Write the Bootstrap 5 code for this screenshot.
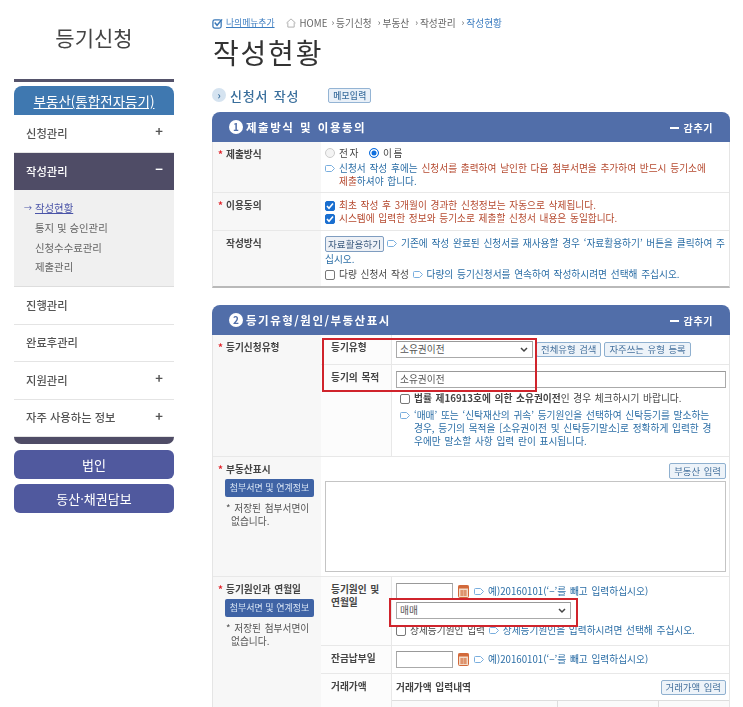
<!DOCTYPE html>
<html lang="ko">
<head>
<meta charset="utf-8">
<title>등기신청 작성현황</title>
<link href="https://cdn.jsdelivr.net/npm/bootstrap@5.3.0/dist/css/bootstrap.min.css" rel="stylesheet">
<style>
html,body{height:707px;overflow:hidden;background:#fff}
body{font-family:"Noto Sans CJK KR","Liberation Sans",sans-serif;font-size:9.7px;line-height:13px;color:#444;word-spacing:1px;white-space:nowrap}
.page-wrap{width:743px;height:707px;padding-left:14px;gap:38px;filter:blur(.35px)}
.side{width:160px;flex:none;word-spacing:0}
.side-title{height:79px;padding-top:22px;font-size:21px;line-height:30px;text-align:center;color:#444}
.side-rule{height:3px;background:#55536b;margin-bottom:4px}
.side-head{height:29px;background:#3f78b0;border-radius:8px 8px 0 0;color:#fff;text-align:center;font-size:13.5px;line-height:30px;text-decoration:underline}
.side-row{height:37.5px;padding:0 11px 0 12px;border-bottom:1px solid #e4e4e4;font-size:11.3px;font-weight:500;color:#555}
.side-row b{font-size:13px;font-weight:700;color:#555;margin-top:-5px}
.side-row.on{background:#4f4c66;color:#fff;border-bottom:0}
.side-row.on b{color:#fff}
.side-sub{height:97px;background:#f0f0f0;border-bottom:1px solid #ddd;padding:8px 0 0 21px;font-size:10.4px;line-height:19.8px;color:#666}
.side-sub .cur{color:#4b55a8;text-decoration:underline}
.side-sub .arw{position:absolute;margin-left:-11px;color:#4b55a8;font-size:8px}
.side-end{height:7px;background:#4f4c66;border-radius:0 0 8px 8px;margin-bottom:6px}
.side-btn{height:29px;background:#50599e;border-radius:6px;color:#fff;text-align:center;line-height:29px;font-size:13px;margin-bottom:5px}
.main-col{width:518px;flex:none}
.crumbs{height:25px;padding-top:21px;font-size:9.7px;line-height:12px;color:#666;word-spacing:0}
.crumbs .mine{color:#3b7cc0;text-decoration:underline;font-size:8.8px;margin:0 11px 0 3px}
.crumbs .now{color:#3b7cc0}
.crumbs .home{margin:0 4px 0 0}
.crumbs .gt{font-size:9px;margin:0 2px 0 6px;color:#666}
.page-h{height:42px;padding-top:11px;font-size:28px;line-height:32px;color:#333;letter-spacing:1.8px;padding-left:1px}
.sect{height:24px;padding-top:21px;gap:4px;color:#3a6f9c;font-size:13px;font-weight:500;line-height:16px;letter-spacing:.8px;box-sizing:content-box}
.sect-dot{width:14px;height:14px;border-radius:50%;background:#d5e3f0;color:#3a6f9c;font-size:10px;line-height:13px;text-align:center;font-weight:700;letter-spacing:0}
.memo{margin-left:25px;font-size:8.8px;line-height:13px;padding:0 4px;height:15px;color:#3d6f9e;background:#e9f0f8;border:1px solid #94b4d4;border-radius:2px;font-weight:500;letter-spacing:.2px;word-spacing:0}
.panel-hd{height:30px;background:#516ea9;border-radius:8px 8px 0 0;padding:0 17px;color:#fff;font-size:11.5px;font-weight:700;letter-spacing:1.5px}
.panel-hd .num{width:14px;height:14px;border-radius:50%;background:#fff;color:#516ea9;font-size:10px;line-height:14px;text-align:center;margin-right:3px;letter-spacing:0}
.panel-hd .hide{font-size:10px;letter-spacing:.6px}
.panel-hd .hide i{display:inline-block;width:9px;height:2px;background:#fff;vertical-align:middle;margin:0 5px 2px 0}
.frm{border-left:1px solid #e5e5e5;border-right:1px solid #e5e5e5}
.frm-a{border-bottom:2px solid #b9b9b9;margin-bottom:17px}
.frm-row{border-top:1px solid #e8e8e8}
.frm-row:first-child{border-top:0}
.frm-l{width:108px;flex:none;background:#f7f7f7;padding:6px 0 0 5px;font-weight:700;color:#444}
.frm-l .dot{display:inline-block;width:8px;color:#e2232a}
.frm-l .dot.no{visibility:hidden}
.frm-r{flex:1;min-width:0;padding:5px 3px 0 4px}
.r1{height:50px}.r2{height:38px}.r3{height:56px}
.r4{height:121px}.r5{height:120px}.r6{height:140px}
.txt-b{color:#2b6ea6}
.txt-r{color:#b5492f}
.ind{padding-left:14px;text-indent:-14px}
.tag{width:10px;height:7px;margin-right:4px;vertical-align:0}
.chk{width:10px;height:10px;flex:none;border:1px solid #777;border-radius:2px;background:#fff;display:inline-block;vertical-align:-2px;margin-right:4px}
.chk.on{background:#1a6fd0;border-color:#1a6fd0;position:relative}
.chk.on svg{position:absolute;left:-1px;top:-1px}
.rad{width:10px;height:10px;border-radius:50%;display:inline-block;vertical-align:-1px;border:1px solid #ccc;margin-right:4px;background:#f4f4f4}
.rad.on{border:1.5px solid #0f6fde;background:#0f6fde;box-shadow:inset 0 0 0 1.5px #fff;margin-left:9px}
.spaced{letter-spacing:1.6px}
.pale-btn{display:inline-block;height:15px;line-height:13px;padding:0 4px;border:1px solid #8fb0cf;border-radius:2px;background:#edf3f9;color:#44709c;font-size:9.4px;word-spacing:1px}
.pale-btn.tall{height:16px;line-height:14px}
.pale-btn.lg{height:16px;width:59px;text-align:center;padding:0;line-height:14px;font-size:9.6px;background:#eef1f6;border-color:#7f9dc0;color:#3f5d80;margin-right:3px;vertical-align:middle}
.lh15{line-height:15px}
.pt6{padding-top:6px}
.sub-l{width:71px;flex:none;padding:6px 0 0 10px;font-weight:700;color:#444;line-height:12.5px;border-right:1px solid #e8e8e8;background:#fcfcfc}
.sub-r{flex:1;min-width:0;padding:0 3px 0 4px}
.hairline{border-top:1px solid #e8e8e8}
.inp{height:17px;border:1px solid #aaa;background:#fff;padding:0 3px;line-height:15px;color:#555;border-top-color:#999}
.selbox{position:relative}
.selbox svg{position:absolute;right:4px;top:5px}
.wsel{width:137px}.wdate{width:57px}.wsel2{width:175px}
.m6{margin-top:6px}.m2{margin-top:2px}.m4{margin-top:4px}.m5{margin-top:5px}
.h1row{height:29px}.h68{height:68px}.h28{height:28px}.h26{height:26px}
.gap5{gap:5px}.gap3{gap:3px}
.att{display:block;margin:3px 0 0 7px;width:89px;height:18px;line-height:17px;background:#3f63a5;color:#d8e4f4;border-radius:2px;font-size:9px;text-align:center;font-weight:400;word-spacing:0}
.att-note{margin:5px 0 0 8px;padding-left:5px;text-indent:-5px;font-weight:400;color:#555;line-height:12.5px;font-size:9.7px}
.btn-line{height:18px}
.area{height:91px;border:1px solid #c4c4c4;background:#fff}
.cal{width:11px;height:13px;flex:none}
.red-box{position:absolute;border:2px solid #d0242c;pointer-events:none}
.rb1{left:109px;top:3px;width:215px;height:54px}
.rb2{left:68px;top:21px;width:189px;height:29px}
.tbl-top{height:8px;border-top:1px solid #ddd;background:#fafafa;margin:0 -3px 0 -4px}
.tc1{width:166px;border-right:1px solid #ddd}.tc2{width:101px;border-right:1px solid #ddd}
</style>
</head>
<body>
<svg width="0" height="0" class="position-absolute"><symbol id="tg" viewBox="0 0 10 7"><path d="M1.500 .5H6.500L9.500 3.500 6.500 6.500H1.500Q.5 6.500 .5 5.500V1.500Q.5 .5 1.500 .5Z" fill="none" stroke="#79aede"/></symbol>
<symbol id="cl" viewBox="0 0 11 13"><rect x=".5" y=".5" width="10" height="12" rx="1" fill="#f3dcc9" stroke="#d2693a"/><rect x=".5" y=".5" width="10" height="3" fill="#d2693a"/><path d="M2 6h7M2 8h7M2 10h7M4 5v6M7 5v6" stroke="#d2693a" stroke-width=".8"/></symbol></svg>
<div class="d-flex page-wrap">
  <aside class="side">
    <div class="side-title">등기신청</div>
    <div class="side-rule"></div>
    <div class="side-head">부동산(통합전자등기)</div>
    <div class="side-row d-flex justify-content-between align-items-center"><span>신청관리</span><b>+</b></div>
    <div class="side-row on d-flex justify-content-between align-items-center"><span>작성관리</span><b>−</b></div>
    <div class="side-sub">
      <div><span class="arw">→</span><span class="cur">작성현황</span></div>
      <div>통지 및 승인관리</div>
      <div>신청수수료관리</div>
      <div>제출관리</div>
    </div>
    <div class="side-row d-flex align-items-center"><span>진행관리</span></div>
    <div class="side-row d-flex align-items-center"><span>완료후관리</span></div>
    <div class="side-row d-flex justify-content-between align-items-center"><span>지원관리</span><b>+</b></div>
    <div class="side-row d-flex justify-content-between align-items-center"><span>자주 사용하는 정보</span><b>+</b></div>
    <div class="side-end"></div>
    <div class="side-btn">법인</div>
    <div class="side-btn">동산·채권담보</div>
  </aside>
  <main class="main-col">
    <div class="crumbs d-flex align-items-center">
      <svg width="11" height="11" viewBox="0 0 12 12"><rect x="1" y="2" width="9" height="9" rx="2" fill="none" stroke="#3a78b8" stroke-width="1.4"/><path d="M3 5l2.500 3L11 1.500" fill="none" stroke="#3a78b8" stroke-width="1.6"/></svg>
      <span class="mine">나의메뉴추가</span>
      <svg class="home" width="10" height="10" viewBox="0 0 11 11"><path d="M.5 5.500L5.500 1l5 4.500M2 5v5h7V5" fill="none" stroke="#aaa"/></svg>
      <span>HOME</span><span class="gt ms-1">›</span><span>등기신청</span><span class="gt">›</span><span>부동산</span><span class="gt">›</span><span>작성관리</span><span class="gt">›</span><span class="now">작성현황</span>
    </div>
    <div class="page-h">작성현황</div>
    <div class="sect d-flex align-items-start"><span class="sect-dot">›</span><span>신청서 작성</span><span class="memo">메모입력</span></div>

    <div class="panel-hd d-flex align-items-center justify-content-between">
      <div class="d-flex align-items-center"><span class="num">1</span>제출방식 및 이용동의</div>
      <div class="hide"><i></i>감추기</div>
    </div>
    <div class="frm frm-a">
      <div class="frm-row r1 d-flex">
        <div class="frm-l"><span class="dot">*</span>제출방식</div>
        <div class="frm-r">
          <div><span class="rad"></span><span class="spaced">전자</span><span class="rad on"></span><span class="spaced">이름</span></div>
          <div class="ind m2"><svg class="tag"><use href="#tg"/></svg><span class="txt-b">신청서 작성 후에는 </span><span class="txt-r">신청서를 출력하여 날인한 다음 첨부서면을 추가하여 반드시 등기소에<br>제출</span><span class="txt-b">하셔야 합니다.</span></div>
        </div>
      </div>
      <div class="frm-row r2 d-flex">
        <div class="frm-l"><span class="dot">*</span>이용동의</div>
        <div class="frm-r pt6">
          <div class="txt-r"><span class="chk on"><svg width="10" height="10" viewBox="0 0 10 10"><path d="M2 5l2 2.200L8 2.500" fill="none" stroke="#fff" stroke-width="1.6"/></svg></span>최초 작성 후 3개월이 경과한 신청정보는 자동으로 삭제됩니다.</div>
          <div class="txt-r"><span class="chk on"><svg width="10" height="10" viewBox="0 0 10 10"><path d="M2 5l2 2.200L8 2.500" fill="none" stroke="#fff" stroke-width="1.6"/></svg></span>시스템에 입력한 정보와 등기소로 제출할 신청서 내용은 동일합니다.</div>
        </div>
      </div>
      <div class="frm-row r3 d-flex">
        <div class="frm-l"><span class="dot no">*</span>작성방식</div>
        <div class="frm-r lh15">
          <div class="txt-b"><span class="pale-btn lg">자료활용하기</span><svg class="tag"><use href="#tg"/></svg>기존에 작성 완료된 신청서를 재사용할 경우 ‘자료활용하기’ 버튼을 클릭하여 주<br>십시오.</div>
          <div><span class="chk"></span>다량 신청서 작성 <svg class="tag"><use href="#tg"/></svg><span class="txt-b">다량의 등기신청서를 연속하여 작성하시려면 선택해 주십시오.</span></div>
        </div>
      </div>
    </div>

    <div class="panel-hd d-flex align-items-center justify-content-between">
      <div class="d-flex align-items-center"><span class="num">2</span>등기유형/원인/부동산표시</div>
      <div class="hide"><i></i>감추기</div>
    </div>
    <div class="frm position-relative">
      <div class="frm-row r4 d-flex position-relative">
        <div class="frm-l"><span class="dot">*</span>등기신청유형</div>
        <div class="flex-grow-1 d-flex flex-column">
          <div class="d-flex h1row">
            <div class="sub-l">등기유형</div>
            <div class="sub-r d-flex gap3 align-items-center">
              <div class="inp selbox wsel">소유권이전<svg width="8" height="6" viewBox="0 0 8 6"><path d="M1 1l3 3 3-3" fill="none" stroke="#444" stroke-width="1.5"/></svg></div>
              <span class="pale-btn">전체유형 검색</span><span class="pale-btn">자주쓰는 유형 등록</span>
            </div>
          </div>
          <div class="d-flex flex-grow-1 hairline">
            <div class="sub-l">등기의 목적</div>
            <div class="sub-r">
              <div class="inp m6">소유권이전</div>
              <div class="ms-1 m4"><span class="chk"></span><b>법률 제16913호에 의한 소유권이전</b>인 경우 체크하시기 바랍니다.</div>
              <div class="ms-1 m4 ind txt-b"><svg class="tag"><use href="#tg"/></svg>‘매매’ 또는 ‘신탁재산의 귀속’ 등기원인을 선택하여 신탁등기를 말소하는<br>경우, 등기의 목적을 [소유권이전 및 신탁등기말소]로 정확하게 입력한 경<br>우에만 말소할 사항 입력 란이 표시됩니다.</div>
            </div>
          </div>
        </div>
        <div class="red-box rb1"></div>
      </div>
      <div class="frm-row r5 d-flex">
        <div class="frm-l"><span class="dot">*</span>부동산표시
          <span class="att">첨부서면 및 연계정보</span>
          <div class="att-note">* 저장된 첨부서면이<br>없습니다.</div>
        </div>
        <div class="frm-r pt6">
          <div class="text-end btn-line"><span class="pale-btn tall">부동산 입력</span></div>
          <div class="area"></div>
        </div>
      </div>
      <div class="frm-row r6 d-flex">
        <div class="frm-l"><span class="dot">*</span>등기원인과 연월일
          <span class="att">첨부서면 및 연계정보</span>
          <div class="att-note">* 저장된 첨부서면이<br>없습니다.</div>
        </div>
        <div class="flex-grow-1 d-flex flex-column">
          <div class="d-flex position-relative h68">
            <div class="sub-l">등기원인 및<br>연월일</div>
            <div class="sub-r">
              <div class="d-flex align-items-center gap5 m6"><div class="inp wdate"></div>
                <svg class="cal"><use href="#cl"/></svg>
                <span class="txt-b"><svg class="tag"><use href="#tg"/></svg>예)20160101(‘−’를 빼고 입력하십시오)</span></div>
              <div class="inp selbox m2 wsel2">매매<svg width="8" height="6" viewBox="0 0 8 6"><path d="M1 1l3 3 3-3" fill="none" stroke="#444" stroke-width="1.5"/></svg></div>
              <div class="m5"><span class="chk"></span>상세등기원인 입력 <svg class="tag"><use href="#tg"/></svg><span class="txt-b">상세등기원인을 입력하시려면 선택해 주십시오.</span></div>
            </div>
            <div class="red-box rb2"></div>
          </div>
          <div class="d-flex hairline h28">
            <div class="sub-l">잔금납부일</div>
            <div class="sub-r d-flex align-items-center gap5"><div class="inp wdate"></div>
              <svg class="cal"><use href="#cl"/></svg>
              <span class="txt-b"><svg class="tag"><use href="#tg"/></svg>예)20160101(‘−’를 빼고 입력하십시오)</span></div>
          </div>
          <div class="d-flex hairline flex-grow-1">
            <div class="sub-l">거래가액</div>
            <div class="sub-r">
              <div class="d-flex justify-content-between align-items-center h26"><b>거래가액 입력내역</b><span class="pale-btn">거래가액 입력</span></div>
              <div class="tbl-top d-flex"><div class="tc1"></div><div class="tc2"></div></div>
            </div>
          </div>
        </div>
      </div>
    </div>
  </main>
</div>
<script src="https://cdn.jsdelivr.net/npm/bootstrap@5.3.0/dist/js/bootstrap.bundle.min.js"></script>
</body>
</html>
